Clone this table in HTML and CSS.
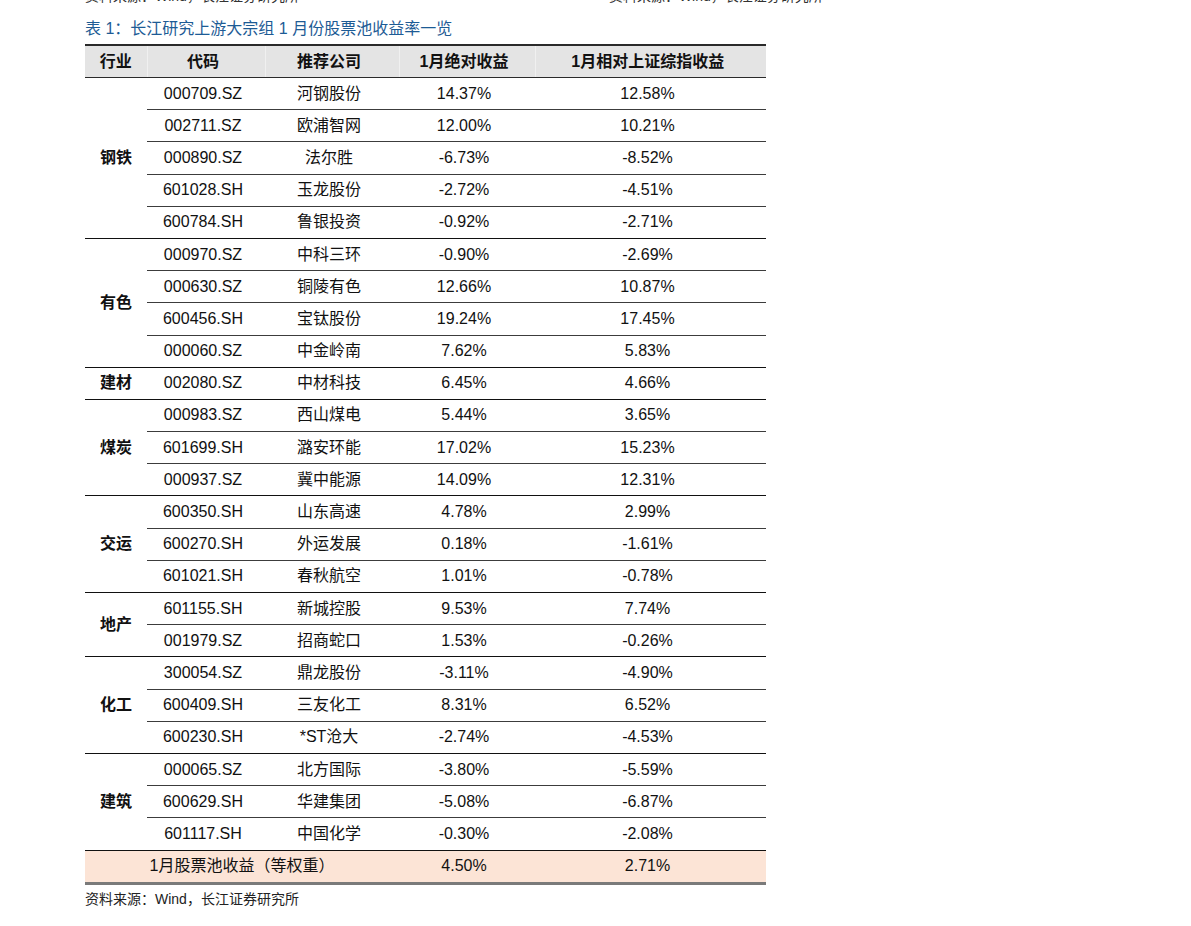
FILE: index.html
```html
<!DOCTYPE html>
<html lang="zh">
<head>
<meta charset="utf-8">
<title>长江研究上游大宗组 1 月份股票池收益率一览</title>
<link rel="stylesheet" href="styles.css">
</head>
<body>
<div class="page">
  <div class="topnotes">
    <span class="note">资料来源：Wind，长江证券研究所</span>
    <span class="note note-right">资料来源：Wind，长江证券研究所</span>
  </div>
  <div class="title">表 1：长江研究上游大宗组 1 月份股票池收益率一览</div>
  <table class="pool">
    <colgroup>
      <col class="c1"><col class="c2"><col class="c3"><col class="c4"><col class="c5">
    </colgroup>
    <thead>
      <tr><th class="first">行业</th><th>代码</th><th>推荐公司</th><th>1月绝对收益</th><th>1月相对上证综指收益</th></tr>
    </thead>
    <tbody>
      <tr><td class="ind" rowspan="5">钢铁</td><td>000709.SZ</td><td>河钢股份</td><td>14.37%</td><td>12.58%</td></tr>
      <tr><td>002711.SZ</td><td>欧浦智网</td><td>12.00%</td><td>10.21%</td></tr>
      <tr><td>000890.SZ</td><td>法尔胜</td><td>-6.73%</td><td>-8.52%</td></tr>
      <tr><td>601028.SH</td><td>玉龙股份</td><td>-2.72%</td><td>-4.51%</td></tr>
      <tr class="last"><td>600784.SH</td><td>鲁银投资</td><td>-0.92%</td><td>-2.71%</td></tr>

      <tr><td class="ind" rowspan="4">有色</td><td>000970.SZ</td><td>中科三环</td><td>-0.90%</td><td>-2.69%</td></tr>
      <tr><td>000630.SZ</td><td>铜陵有色</td><td>12.66%</td><td>10.87%</td></tr>
      <tr><td>600456.SH</td><td>宝钛股份</td><td>19.24%</td><td>17.45%</td></tr>
      <tr class="last"><td>000060.SZ</td><td>中金岭南</td><td>7.62%</td><td>5.83%</td></tr>

      <tr class="last"><td class="ind">建材</td><td>002080.SZ</td><td>中材科技</td><td>6.45%</td><td>4.66%</td></tr>

      <tr><td class="ind" rowspan="3">煤炭</td><td>000983.SZ</td><td>西山煤电</td><td>5.44%</td><td>3.65%</td></tr>
      <tr><td>601699.SH</td><td>潞安环能</td><td>17.02%</td><td>15.23%</td></tr>
      <tr class="last"><td>000937.SZ</td><td>冀中能源</td><td>14.09%</td><td>12.31%</td></tr>

      <tr><td class="ind" rowspan="3">交运</td><td>600350.SH</td><td>山东高速</td><td>4.78%</td><td>2.99%</td></tr>
      <tr><td>600270.SH</td><td>外运发展</td><td>0.18%</td><td>-1.61%</td></tr>
      <tr class="last"><td>601021.SH</td><td>春秋航空</td><td>1.01%</td><td>-0.78%</td></tr>

      <tr><td class="ind" rowspan="2">地产</td><td>601155.SH</td><td>新城控股</td><td>9.53%</td><td>7.74%</td></tr>
      <tr class="last"><td>001979.SZ</td><td>招商蛇口</td><td>1.53%</td><td>-0.26%</td></tr>

      <tr><td class="ind" rowspan="3">化工</td><td>300054.SZ</td><td>鼎龙股份</td><td>-3.11%</td><td>-4.90%</td></tr>
      <tr><td>600409.SH</td><td>三友化工</td><td>8.31%</td><td>6.52%</td></tr>
      <tr class="last"><td>600230.SH</td><td>*ST沧大</td><td>-2.74%</td><td>-4.53%</td></tr>

      <tr><td class="ind" rowspan="3">建筑</td><td>000065.SZ</td><td>北方国际</td><td>-3.80%</td><td>-5.59%</td></tr>
      <tr><td>600629.SH</td><td>华建集团</td><td>-5.08%</td><td>-6.87%</td></tr>
      <tr class="last"><td>601117.SH</td><td>中国化学</td><td>-0.30%</td><td>-2.08%</td></tr>

      <tr class="summary"><td class="sumlabel" colspan="3">1月股票池收益（等权重）</td><td>4.50%</td><td>2.71%</td></tr>
    </tbody>
  </table>
  <div class="source">资料来源：Wind，长江证券研究所</div>
</div>
</body>
</html>
```

FILE: styles.css
```css
html, body {
  margin: 0;
  padding: 0;
  background: #ffffff;
}

body {
  font-family: "Liberation Sans", Arial, "Noto Sans CJK SC", sans-serif;
  color: #111111;
}

.page {
  padding-left: 85px;
  width: 681px;
}

.topnotes {
  display: flex;
  height: 4px;
  overflow: visible;
  font-size: 14px;
  line-height: 16px;
  color: #333333;
}

.note {
  display: block;
  margin-top: -12px;
  white-space: nowrap;
}

.note-right {
  margin-left: 310px;
}

.title {
  margin-top: 16px;
  height: 24px;
  font-size: 16px;
  line-height: 18px;
  color: #1d5b95;
}

.pool {
  border-collapse: collapse;
  table-layout: fixed;
  width: 681px;
  font-size: 16px;
  line-height: 20px;
}

.c1 { width: 62px; }
.c2 { width: 118px; }
.c3 { width: 134px; }
.c4 { width: 136px; }
.c5 { width: 231px; }

.pool th {
  background: #e4e4e4;
  font-weight: bold;
  height: 31px;
  padding: 0 6px 0 0;
  text-align: center;
  border-top: 2px solid #2a2a2a;
  border-bottom: 1px solid #2a2a2a;
  border-left: 1px solid #f0f0f0;
  border-right: 1px solid #f0f0f0;
  color: #111111;
}

.pool th.first {
  border-left: none;
  padding-right: 0;
}

.pool th:last-child { border-right: none; }

.pool td {
  height: 31.2px;
  padding: 0 6px 0 0;
  text-align: center;
  border-bottom: 1px solid #3c3c3c;
  white-space: nowrap;
}

.pool tr.last td {
  border-bottom-color: #111111;
}

.pool td.ind {
  font-weight: bold;
  padding-right: 0;
  border-bottom-color: #111111;
}

.pool tr.summary td {
  background: #fce4d6;
  border-top: 1px solid #111111;
  border-bottom: 3px solid #7a7a7a;
}

.pool td.sumlabel {
  padding-right: 0;
}

.source {
  margin-top: 5px;
  font-size: 14px;
  line-height: 18px;
  color: #222222;
}
```
